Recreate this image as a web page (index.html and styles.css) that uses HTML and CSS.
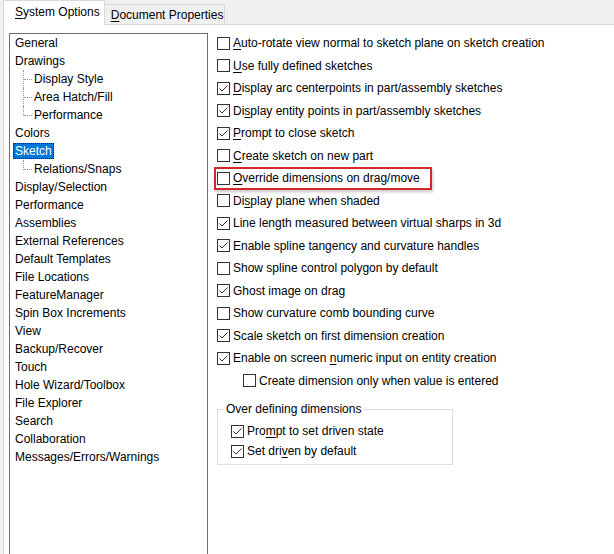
FILE: index.html
```html
<!DOCTYPE html>
<html>
<head>
<meta charset="utf-8">
<link rel="stylesheet" href="styles.css">
</head>
<body>
<div class="tabs">
  <div class="tab active"><u>S</u>ystem Options</div>
  <div class="tab"><u>D</u>ocument Properties</div>
</div>
<div class="panel">
  <ul class="tree">
    <li class="item"><span>General</span></li>
    <li class="item"><span>Drawings</span></li>
    <li class="item child"><span>Display Style</span></li>
    <li class="item child"><span>Area Hatch/Fill</span></li>
    <li class="item child last"><span>Performance</span></li>
    <li class="item"><span>Colors</span></li>
    <li class="item selected"><span>Sketch</span></li>
    <li class="item child last"><span>Relations/Snaps</span></li>
    <li class="item"><span>Display/Selection</span></li>
    <li class="item"><span>Performance</span></li>
    <li class="item"><span>Assemblies</span></li>
    <li class="item"><span>External References</span></li>
    <li class="item"><span>Default Templates</span></li>
    <li class="item"><span>File Locations</span></li>
    <li class="item"><span>FeatureManager</span></li>
    <li class="item"><span>Spin Box Increments</span></li>
    <li class="item"><span>View</span></li>
    <li class="item"><span>Backup/Recover</span></li>
    <li class="item"><span>Touch</span></li>
    <li class="item"><span>Hole Wizard/Toolbox</span></li>
    <li class="item"><span>File Explorer</span></li>
    <li class="item"><span>Search</span></li>
    <li class="item"><span>Collaboration</span></li>
    <li class="item"><span>Messages/Errors/Warnings</span></li>
  </ul>
  <div class="options">
    <div class="opt"><span class="cb"></span><span><u>A</u>uto-rotate view normal to sketch plane on sketch creation</span></div>
    <div class="opt"><span class="cb"></span><span><u>U</u>se fully defined sketches</span></div>
    <div class="opt"><span class="cb on"><svg viewBox="0 0 11 11"><path d="M1.5 5.5 L4 8 L9.5 2.5"/></svg></span><span><u>D</u>isplay arc centerpoints in part/assembly sketches</span></div>
    <div class="opt"><span class="cb on"><svg viewBox="0 0 11 11"><path d="M1.5 5.5 L4 8 L9.5 2.5"/></svg></span><span>Di<u>s</u>play entity points in part/assembly sketches</span></div>
    <div class="opt"><span class="cb on"><svg viewBox="0 0 11 11"><path d="M1.5 5.5 L4 8 L9.5 2.5"/></svg></span><span><u>P</u>rompt to close sketch</span></div>
    <div class="opt"><span class="cb"></span><span><u>C</u>reate sketch on new part</span></div>
    <div class="opt marked"><span class="cb"></span><span><u>O</u>verride dimensions on drag/move</span></div>
    <div class="opt"><span class="cb"></span><span>Di<u>s</u>play plane when shaded</span></div>
    <div class="opt"><span class="cb on"><svg viewBox="0 0 11 11"><path d="M1.5 5.5 L4 8 L9.5 2.5"/></svg></span><span>Line length measured between virtual sharps in 3d</span></div>
    <div class="opt"><span class="cb on"><svg viewBox="0 0 11 11"><path d="M1.5 5.5 L4 8 L9.5 2.5"/></svg></span><span>Enable spline tangency and curvature handles</span></div>
    <div class="opt"><span class="cb"></span><span>Show spline control polygon by default</span></div>
    <div class="opt"><span class="cb on"><svg viewBox="0 0 11 11"><path d="M1.5 5.5 L4 8 L9.5 2.5"/></svg></span><span>Ghost image on drag</span></div>
    <div class="opt"><span class="cb"></span><span>Show curvature comb bounding curve</span></div>
    <div class="opt"><span class="cb on"><svg viewBox="0 0 11 11"><path d="M1.5 5.5 L4 8 L9.5 2.5"/></svg></span><span>Scale sketch on first dimension creation</span></div>
    <div class="opt"><span class="cb on"><svg viewBox="0 0 11 11"><path d="M1.5 5.5 L4 8 L9.5 2.5"/></svg></span><span>Enable on screen <u>n</u>umeric input on entity creation</span></div>
    <div class="opt sub"><span class="cb"></span><span>Create dimension only when value is entered</span></div>
    <fieldset class="group">
      <legend>Over defining dimensions</legend>
      <div class="gopt"><span class="cb on"><svg viewBox="0 0 11 11"><path d="M1.5 5.5 L4 8 L9.5 2.5"/></svg></span><span>Pro<u>m</u>pt to set driven state</span></div>
      <div class="gopt"><span class="cb on"><svg viewBox="0 0 11 11"><path d="M1.5 5.5 L4 8 L9.5 2.5"/></svg></span><span>Set dri<u>v</u>en by default</span></div>
    </fieldset>
  </div>
</div>
</body>
</html>
```
FILE: styles.css
```css
html, body {
  margin: 0;
  padding: 0;
  background: #f0f0f0;
  overflow: hidden;
  height: 554px;
}
body {
  font-family: "Liberation Sans", Arial, sans-serif;
  font-size: 12px;
  color: #000;
}
u { text-decoration: underline; text-underline-offset: 2px; }

.tabs {
  display: flex;
  align-items: flex-end;
  height: 24px;
  padding-left: 3px;
}
.tab {
  box-sizing: border-box;
  border: 1px solid #d9d9d9;
  border-bottom: none;
  white-space: nowrap;
}
.tab.active {
  height: 25px;
  margin-bottom: -1px;
  background: #fff;
  padding: 0 4px 0 11px;
  line-height: 22px;
  position: relative;
  z-index: 1;
}
.tab:not(.active) {
  height: 20px;
  margin-left: -1px;
  padding: 1px 1px 0 6px;
  line-height: 18px;
  background: #f0f0f0;
}

.panel {
  box-sizing: border-box;
  height: 530px;
  margin-left: 3px;
  border-top: 1px solid #d9d9d9;
  border-left: 1px solid #d9d9d9;
  background: #fff;
  display: flex;
  align-items: flex-start;
}

.tree {
  list-style: none;
  box-sizing: border-box;
  width: 199px;
  height: 540px;
  margin: 8px 0 0 5px;
  padding: 0;
  border: 1px solid #6e6e6e;
  flex: none;
}
.item {
  position: relative;
  height: 18px;
  display: flex;
  align-items: center;
}
.item span {
  margin-left: 3px;
  padding: 0 2px;
  line-height: 16px;
  white-space: nowrap;
}
.item.child span { margin-left: 22px; }
.item.child::before {
  content: "";
  position: absolute;
  left: 13px;
  top: 0;
  height: 18px;
  border-left: 1px dotted #9a9a9a;
}
.item.child.last::before { height: 10px; }
.item.child::after {
  content: "";
  position: absolute;
  left: 14px;
  top: 9px;
  width: 8px;
  border-top: 1px dotted #9a9a9a;
}
.item.selected span {
  background: #0078d7;
  color: #fff;
  outline: 1px dotted #1a1a1a;
  outline-offset: -1px;
}

.options {
  margin-left: 9px;
  padding-top: 7px;
  flex: 1;
}
.opt, .gopt {
  display: flex;
  align-items: center;
  height: 22.5px;
  white-space: nowrap;
}
.opt.sub { padding-left: 26px; }
.gopt { height: 20px; padding-left: 7px; }
.opt.marked { position: relative; }
.opt.marked::after {
  content: "";
  position: absolute;
  left: -3px;
  top: 0;
  width: 218px;
  height: 23px;
  box-sizing: border-box;
  border: 2px solid #d1272d;
  box-shadow: 1px 2px 3px rgba(0,0,0,0.22);
}

.cb {
  box-sizing: border-box;
  width: 13px;
  height: 13px;
  border: 1px solid #333;
  background: #fff;
  margin-right: 3px;
  flex: none;
  display: flex;
}
.cb svg {
  width: 11px;
  height: 11px;
}
.cb svg path {
  fill: none;
  stroke: #333;
  stroke-width: 1;
}

.group {
  box-sizing: border-box;
  width: 236px;
  margin: 9px 0 0 0;
  padding: 4px 6px 3px;
  border: 1px solid #dcdcdc;
  min-inline-size: 0;
}
.group legend {
  padding: 0 2px;
  line-height: 16px;
}
```
